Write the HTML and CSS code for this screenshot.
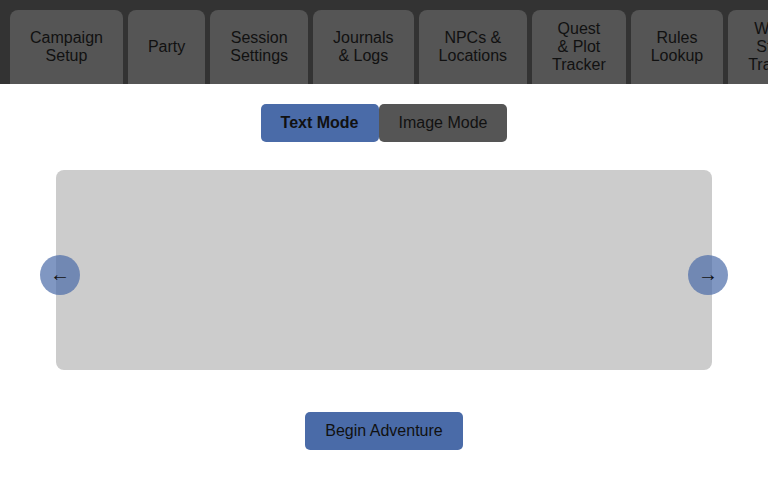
FILE: index.html
```html
<!DOCTYPE html>
<html lang="en">
<head>
<meta charset="utf-8">
<title>Campaign</title>
<link rel="stylesheet" href="styles.css">
</head>
<body>
<nav class="tabs">
  <div class="tab">Campaign Setup</div>
  <div class="tab">Party</div>
  <div class="tab">Session Settings</div>
  <div class="tab">Journals &amp; Logs</div>
  <div class="tab">NPCs &amp; Locations</div>
  <div class="tab">Quest &amp; Plot Tracker</div>
  <div class="tab">Rules Lookup</div>
  <div class="tab">World State Tracker</div>
</nav>
<main class="main">
  <div class="modes">
    <button class="mode active">Text Mode</button>
    <button class="mode">Image Mode</button>
  </div>
  <div class="carousel">
    <div class="slide"></div>
    <button class="arrow prev">&larr;</button>
    <button class="arrow next">&rarr;</button>
  </div>
  <button class="begin">Begin Adventure</button>
</main>
</body>
</html>
```
FILE: styles.css
```css
* { box-sizing: border-box; }
body {
  margin: 0;
  font-family: "Liberation Sans", Arial, sans-serif;
  font-size: 16px;
  background: #fff;
  color: #111;
  overflow: hidden;
}
.tabs {
  display: flex;
  gap: 5px;
  background: #333;
  padding: 10px 10px 0;
  overflow: hidden;
}
.tab {
  display: flex;
  align-items: center;
  justify-content: center;
  text-align: center;
  background: #555;
  color: #111;
  padding: 10px 20px;
  line-height: 18px;
  border-radius: 8px 8px 0 0;
  min-height: 74px;
}
.main {
  display: flex;
  flex-direction: column;
  align-items: center;
  padding: 20px 0;
}
.modes {
  display: flex;
}
button {
  font-family: inherit;
  font-size: 16px;
  border: none;
  cursor: pointer;
}
.mode {
  background: #555;
  color: #111;
  padding: 10px 20px;
  line-height: 18px;
  border-radius: 5px;
}
.mode.active {
  background: #4a6ba8;
  font-weight: bold;
}
.carousel {
  position: relative;
  width: 656px;
  margin-top: 28px;
}
.slide {
  height: 200px;
  background: #ccc;
  border-radius: 8px;
}
.arrow {
  position: absolute;
  top: 85px;
  width: 40px;
  height: 40px;
  border-radius: 50%;
  background: rgba(74, 107, 168, 0.7);
  color: #111;
  font-size: 20px;
  line-height: 36px;
  padding: 0 0 2px;
  text-align: center;
}
.prev { left: -16px; }
.next { right: -16px; }
.begin {
  margin-top: 42px;
  background: #4a6ba8;
  color: #111;
  padding: 10px 20px;
  line-height: 18px;
  border-radius: 5px;
}
```
